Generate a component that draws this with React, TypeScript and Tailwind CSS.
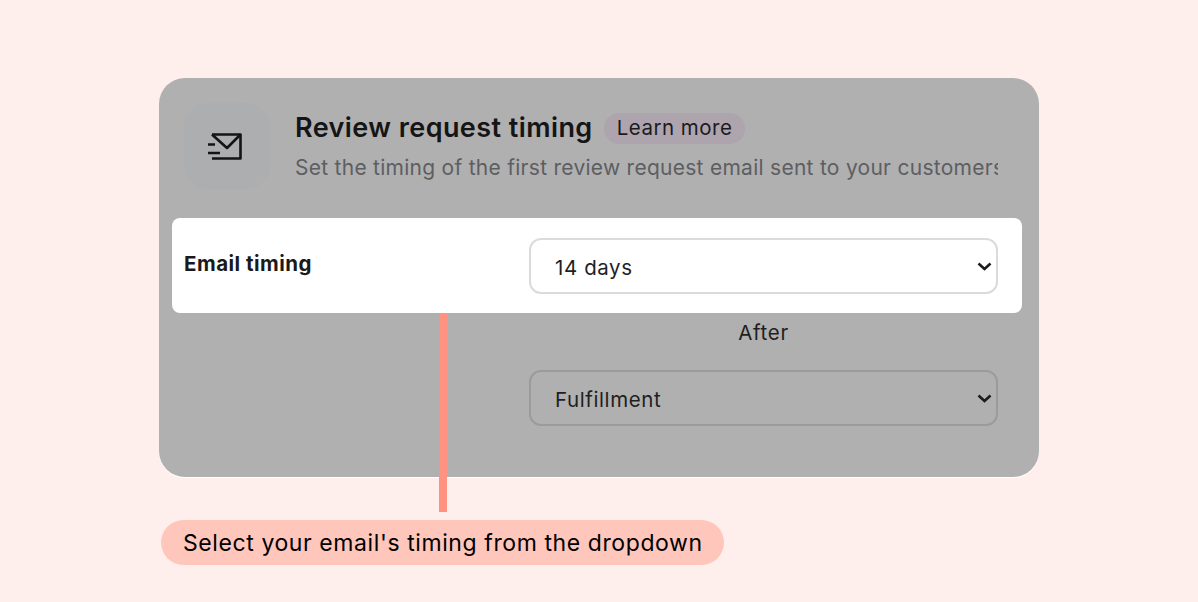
const font = { fontFamily: 'Inter, "Liberation Sans", sans-serif' };

function MailIcon() {
  return (
    <svg className="mr-1" width="34" height="27" viewBox="0 0 34 27" fill="none" stroke="#141414" strokeWidth="2.6">
      <path d="M4 1.5H32.5V25.5H4" strokeLinejoin="round" />
      <path d="M4 1.5L19 15L32.5 1.5" strokeLinejoin="round" />
      <path d="M0 11.5H7M0 20H12" />
    </svg>
  );
}

function Dropdown({ value, className }: { value: string; className: string }) {
  return (
    <div className="relative w-[469px] h-[56px]">
      <select className={`w-full h-full rounded-xl border-2 pl-[24px] pt-[5px] text-[20.5px] tracking-[0.6px] text-[#1f1f1f] appearance-none ${className}`}>
        <option>{value}</option>
      </select>
      <svg className="absolute right-[6px] top-[24px]" width="15" height="10" viewBox="0 0 15 10" fill="none" stroke="#1c1c1c" strokeWidth="2.6">
        <path d="M1.5 1.5L7.5 7L13.5 1.5" />
      </svg>
    </div>
  );
}

export default function App() {
  return (
    <div className="relative w-[1198px] h-[602px] overflow-hidden bg-[#ffefec] pt-[78px] pl-[159px]" style={font}>
      {/* Dimmed settings card */}
      <div className="w-[880px] h-[399px] rounded-[26px] bg-[#b0b0b0] pt-[25px] shadow-[0_1px_0_#fff]">
        <div className="flex pl-[25px] pr-[41px]">
          <div className="flex items-center justify-center w-[86px] h-[86px] shrink-0 rounded-[24px] bg-[#adaeb0]">
            <MailIcon />
          </div>
          <div className="ml-[25px] min-w-0 flex-1 overflow-hidden">
            <div className="flex items-center h-[50px]">
              <h2 className="text-[27px] leading-[32px] font-semibold tracking-[0.43px] text-[#151515] whitespace-nowrap">Review request timing</h2>
              <span className="ml-[11px] flex items-center h-[31px] px-[13px] rounded-full bg-[#ada4ae] text-[20.5px] tracking-[0.5px] text-[#1c1a1e] whitespace-nowrap">Learn more</span>
            </div>
            <p className="text-[21px] leading-[30px] tracking-[0.27px] text-[#5d5e62] whitespace-nowrap">
              Set the timing of the first review request email sent to your customers
            </p>
          </div>
        </div>

        {/* Highlighted row */}
        <div className="flex items-center justify-between ml-[13px] mt-[29px] w-[850px] h-[95px] rounded-lg bg-white pl-3 pr-6">
          <span className="text-[20.5px] font-bold tracking-[0.5px] text-[#1a1a1a] -mt-[3px]">Email timing</span>
          <Dropdown value="14 days" className="border-[#d9dbdf] bg-white" />
        </div>

        <div className="flex flex-col items-end pr-[41px]">
          <div className="w-[469px] mt-[6px] pt-px text-center text-[20.5px] leading-[26px] tracking-[0.7px] text-[#1f1f1f]">After</div>
          <div className="mt-[24px]">
            <Dropdown value="Fulfillment" className="border-[#9a9b9e] bg-[#b0b0b0]" />
          </div>
        </div>
      </div>

      {/* Callout */}
      <div className="absolute left-[439px] top-[314px] w-2 h-[198px] bg-[#ff9280]" />
      <div className="flex items-center w-[563px] h-[45px] mt-[43px] ml-[2px] rounded-full bg-[#ffc6bc] pl-[22px] pt-[2px] text-[23px] tracking-[0.59px] text-black whitespace-nowrap">
        Select your email's timing from the dropdown
      </div>
    </div>
  );
}
